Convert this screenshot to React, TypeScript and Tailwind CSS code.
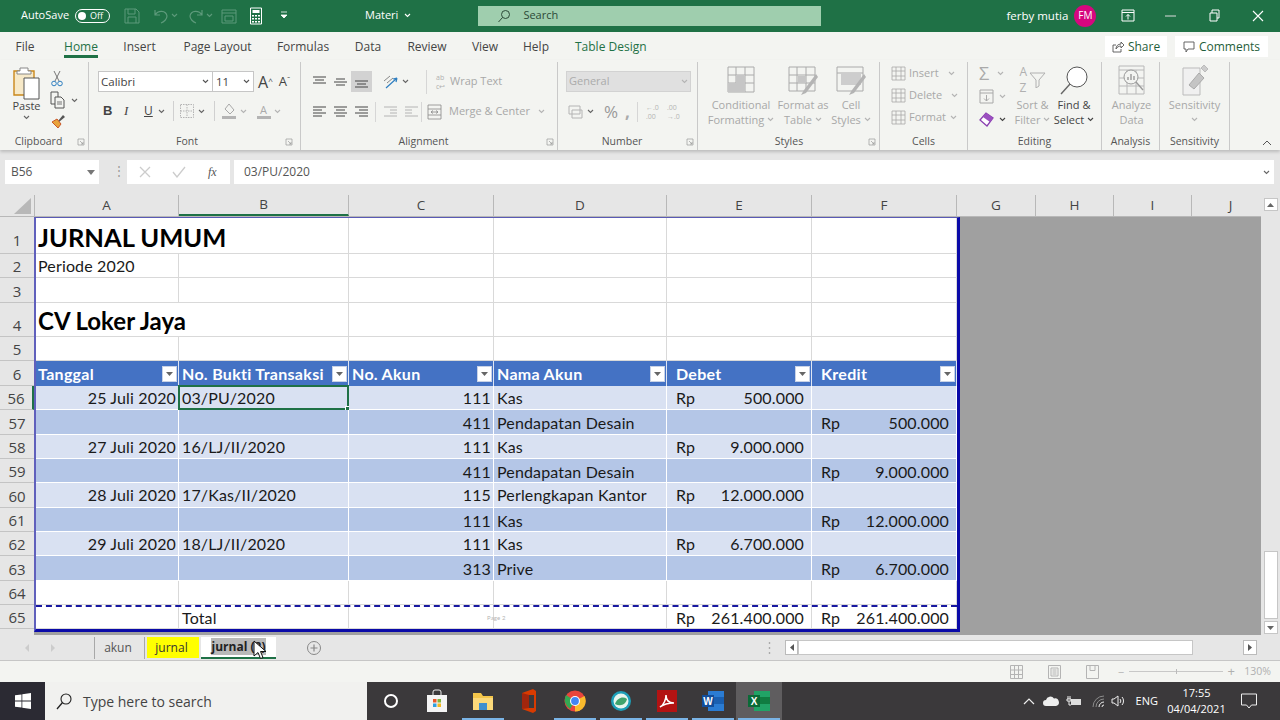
import React from "react";

type P = { className?: string; c?: string };
const Chev = ({ className = "", c = "#8a8a8a" }: P) => (
  <svg width="7" height="5" viewBox="0 0 7 5" className={className + " shrink-0"}><path d="M1 1l2.500 2.500L6 1" fill="none" stroke={c} strokeWidth="1.100" /></svg>
);
const Ic = ({ w = 16, h = 16, className = "", children }: { w?: number; h?: number; className?: string; children: React.ReactNode }) => (
  <svg width={w} height={h} viewBox={`0 0 ${w} ${h}`} fill="none" className={className + " shrink-0"}>{children}</svg>
);
const G = "#b4b4b4";

/* ---------- Title bar ---------- */
function TitleBar() {
  return (
    <div className="h-8 bg-[#1f7146] flex items-center text-white text-[11px] shrink-0 whitespace-nowrap pb-[1px]">
      <span className="ml-[21px] w-[51px]">AutoSave</span>
      <div className="ml-[3px] w-[35px] h-[14px] rounded-full border border-white flex items-center gap-[4px] pl-[2px]">
        <div className="w-2 h-2 rounded-full bg-white" />
        <span className="text-[9px] leading-none">Off</span>
      </div>
      <Ic w={18} h={18} className="ml-[13px]"><path d="M2 2h11l3 3v11H2zM5 2v5h7V2M5 16v-6h8v6" stroke="#5d9a7b" /></Ic>
      <Ic w={18} h={18} className="ml-[11px]"><path d="M3 3v5h5M3 8c3-5 11-5 12 1 0 3-3 6-6 7" stroke="#5d9a7b" strokeWidth="1.200" /></Ic>
      <Chev c="#5d9a7b" className="ml-[1px]" />
      <Ic w={18} h={18} className="ml-[9px]"><path d="M15 3v5h-5M15 8c-3-5-11-5-12 1 0 3 3 6 6 7" stroke="#5d9a7b" strokeWidth="1.200" /></Ic>
      <Chev c="#5d9a7b" className="ml-[1px]" />
      <Ic w={16} h={16} className="ml-[8px]"><path d="M1 2h14v13H1zM1 5h14M4 8h8v5H4z" stroke="#5d9a7b" /></Ic>
      <Ic w={14} h={18} className="ml-[12px]"><path d="M1.500 1h11v16h-11z" stroke="#fff" /><path d="M3.500 3h7v3h-7zM3 8h2v1.500H3zM6 8h2v1.500H6zM9 8h2v1.500H9zM3 11h2v1.500H3zM6 11h2v1.500H6zM9 11h2v1.500H9zM3 14h2v1.500H3zM6 14h2v1.500H6zM9 14h2v1.500H9z" fill="#fff" /></Ic>
      <Ic w={8} h={9} className="ml-[17px]"><path d="M1 1h6M1 4l3 3 3-3z" stroke="#fff" fill="#fff" strokeWidth=".8" /></Ic>
      <span className="ml-[77px]">Materi</span>
      <Chev c="#fff" className="ml-[6px]" />
      <div className="ml-[67px] w-[343px] h-[20px] bg-[#9fceae] flex items-center text-[#2c4a38]">
        <Ic w={14} h={14} className="ml-[19px]"><circle cx="8.500" cy="5.500" r="4" stroke="#2c4a38" /><path d="M5.500 8.500L1.500 13" stroke="#2c4a38" /></Ic>
        <span className="ml-[12px]">Search</span>
      </div>
      <span className="ml-[185px] text-[11.5px] w-[60px]">ferby mutia</span>
      <div className="ml-[8px] w-[22px] h-[22px] rounded-full bg-[#d6077f] flex items-center justify-center text-[10px]">FM</div>
      <Ic w={14} h={13} className="ml-[25px]"><path d="M1 1h12v11H1zM1 3.500h12M7 10.500V5.500M5 7.500l2-2 2 2" stroke="#fff" /></Ic>
      <Ic w={11} h={2} className="ml-[30px]"><path d="M0 1h11" stroke="#ddd" /></Ic>
      <Ic w={11} h={13} className="ml-[33px]"><path d="M1 4h7v8H1zM3 4V1h7v8H8" stroke="#fff" /></Ic>
      <Ic w={12} h={12} className="ml-[32px]"><path d="M1 1l10 10M11 1L1 11" stroke="#fff" strokeWidth="1.100" /></Ic>
    </div>
  );
}

/* ---------- Tabs ---------- */
function TabRow() {
  const t = (s: string, cls: string, active = false) => (
    <div className={"h-full flex items-center justify-center relative whitespace-nowrap " + cls}>
      <span className={active ? "text-[#1f7146]" : ""}>{s}</span>
      {active && <div className="absolute left-0 right-0 bottom-[2px] h-[3px] bg-[#1f7146]" />}
    </div>
  );
  return (
    <div className="h-7 bg-[#f3f4f1] flex items-center text-[12px] text-[#444] shrink-0 pt-[1px]">
      {t("File", "ml-[16px] w-[18px]")}
      {t("Home", "ml-[30px] w-[34px]", true)}
      {t("Insert", "ml-[26px] w-[31px]")}
      {t("Page Layout", "ml-[29px] w-[67px]")}
      {t("Formulas", "ml-[27px] w-[50px]")}
      {t("Data", "ml-[27px] w-[26px]")}
      {t("Review", "ml-[27px] w-[38px]")}
      {t("View", "ml-[26px] w-[26px]")}
      {t("Help", "ml-[25px] w-[26px]")}
      <div className="ml-[26px] w-[70px] text-[#1f7146] whitespace-nowrap">Table Design</div>
      <div className="ml-[460px] w-[62px] h-[21px] bg-white flex items-center justify-center gap-[4px] text-[#1f5e3b]">
        <Ic w={12} h={12}><path d="M1 4v7h8V8M1 4h3M4 8c0-3 2-5 5-5V1l3 3-3 3V5c-2 0-4 1-5 3z" stroke="#555" strokeWidth=".9" /></Ic>
        <span>Share</span>
      </div>
      <div className="ml-[8px] w-[93px] h-[21px] bg-white flex items-center justify-center gap-[4px] text-[#1f5e3b]">
        <Ic w={12} h={12}><path d="M1 1h10v7H5l-2 3V8H1z" stroke="#555" strokeWidth=".9" /></Ic>
        <span>Comments</span>
      </div>
    </div>
  );
}

/* ---------- Ribbon ---------- */
const Launcher = () => (
  <Ic w={8} h={8} className="ml-auto"><path d="M1 1h6v6H1zM3 3l3 3M4 6h2V4" stroke="#999" strokeWidth=".7" /></Ic>
);
function Group({ w, label, launcher = false, lab = "", children }: { w: string; label: string; launcher?: boolean; lab?: string; children: React.ReactNode }) {
  return (
    <div className={"h-full flex flex-col shrink-0 border-r border-[#c9c9c9] " + w}>
      <div className="h-[73px] flex">{children}</div>
      <div className={"h-[14px] flex items-center " + (launcher ? "pr-[3px] " : "") + lab}>
        <span className="flex-1 text-center text-[10.5px] text-[#555]">{label}</span>
        {launcher && <Launcher />}
      </div>
    </div>
  );
}
const Big = ({ a, b, w, icon, dark, chev2 }: { a: string; b?: string; w: string; icon: React.ReactNode; dark?: boolean; chev2?: boolean }) => (
  <div className={"flex flex-col items-center shrink-0 text-[11px] leading-[15px] " + w + (dark ? " text-[#444]" : " text-[#a8a8a8]")}>
    <div className="h-[35px] flex items-center justify-center">{icon}</div>
    <span className="whitespace-nowrap">{a}</span>
    <span className="whitespace-nowrap flex items-center gap-[3px]">{b}{chev2 && <Chev c={dark ? "#444" : G} />}</span>
  </div>
);
const HL = ({ rows, x = 1 }: { rows: number[][]; x?: number }) => (
  <Ic w={15} h={15}>{rows.map((r, i) => <path key={i} d={`M${r[0]} ${r[1]}h${r[2]}`} stroke={x ? "#444" : G} />)}</Ic>
);

function Ribbon() {
  return (
    <div className="h-[90px] bg-[#f3f4f1] flex text-[11px] shrink-0 pt-[2px] shadow-[0_2px_3px_rgba(0,0,0,0.18)] relative z-10">
      {/* Clipboard */}
      <Group w="w-[89px]" label="Clipboard" launcher>
        <div className="w-[50px] flex flex-col items-center text-[#444] pt-[4px] pl-[3px]">
          <Ic w={32} h={34}>
            <path d="M3 5h20v24H3z" fill="#f7e9c8" stroke="#c9871a" strokeWidth="1.400" />
            <path d="M9 5V2h8v3h3v3H6V5z" fill="#fff" stroke="#888" />
            <path d="M13 12h15v21H13z" fill="#fff" stroke="#555" />
          </Ic>
          <span className="-mt-[1px] leading-[14px]">Paste</span>
          <Chev c="#666" className="mt-[2px]" />
        </div>
        <div className="flex flex-col gap-[4px] pt-[8px]">
          <Ic w={14} h={17}><path d="M4 1l5 10M10 1L5 11" stroke="#777" /><circle cx="4" cy="13.500" r="2.300" stroke="#2f7fc1" /><circle cx="10" cy="13.500" r="2.300" stroke="#2f7fc1" /></Ic>
          <div className="flex items-center gap-[5px]">
            <Ic w={16} h={18}><path d="M1 1h7v12H1z" stroke="#555" /><path d="M5 6h6l3 3v8H5z" fill="#f3f4f1" stroke="#555" /><path d="M7 11h5M7 13h5" stroke="#777" /></Ic>
            <Chev c="#666" />
          </div>
          <Ic w={16} h={16}><path d="M8 8l5-6 2 2-6 5z" fill="#555" /><path d="M2 9l5-3 4 5-3 4z" fill="#e8a33c" stroke="#c9582a" /></Ic>
        </div>
      </Group>

      {/* Font */}
      <Group w="w-[212px]" label="Font" launcher lab="pr-[7px]">
        <div className="pl-[9px] pt-[9px] flex flex-col">
          <div className="flex items-center h-[21px]">
            <div className="w-[115px] h-[21px] bg-white border border-[#c6c6c6] flex items-center px-[2px] text-[11.5px] text-[#444]">Calibri<Chev c="#555" className="ml-auto mr-[1px]" /></div>
            <div className="w-[41px] h-[21px] bg-white border border-l-0 border-[#c6c6c6] flex items-center px-[3px] text-[11.5px] text-[#444]">11<Chev c="#555" className="ml-auto" /></div>
            <span className="ml-[4px] text-[16px] leading-none text-[#444]">A<sup className="text-[8px]">^</sup></span>
            <span className="ml-[6px] text-[13px] leading-none text-[#444]">A<sup className="text-[8px]">ˇ</sup></span>
          </div>
          <div className="flex items-center h-[20px] mt-[9px] pl-[5px] text-[#444]">
            <span className="w-[21px] font-bold text-[13px] [font-family:'Liberation_Sans',sans-serif]">B</span>
            <span className="w-[20px] italic text-[13px] [font-family:'Liberation_Serif',serif]">I</span>
            <span className="w-[14px] underline text-[12px]">U</span>
            <Chev c="#666" />
            <div className="ml-[8px] w-px h-[20px] bg-[#d0d0d0]" />
            <Ic w={16} h={16} className="ml-[5px]"><path d="M1.500 1.500h13v13h-13zM8 1.500v13M1.500 8h13" stroke={G} strokeDasharray="1.500 1" /></Ic>
            <Chev c="#666" className="ml-[3px]" />
            <div className="ml-[9px] w-px h-[20px] bg-[#d0d0d0]" />
            <Ic w={16} h={17} className="ml-[6px]"><path d="M8 1l5 6-4 4-5-5z" stroke="#a8a8a8" /><path d="M1 13h14v3H1z" fill={G} /></Ic>
            <Chev c={G} className="ml-[3px]" />
            <div className="ml-[9px] w-[15px] flex flex-col items-center text-[#aaa] leading-[12px]">A<div className="w-[14px] h-[3px] bg-[#b4b4b4]" /></div>
            <Chev c={G} className="ml-[3px]" />
          </div>
        </div>
      </Group>

      {/* Alignment */}
      <Group w="w-[257px]" label="Alignment" launcher>
        <div className="pl-[11px] pt-[9px] flex flex-col">
          <div className="flex items-center h-[21px]">
            <div className="w-[21px]"><HL rows={[[1, 3, 13], [3, 6, 9], [1, 9, 13]]} /></div>
            <div className="w-[18px]"><HL rows={[[3, 5, 9], [1, 8, 13], [3, 11, 9]]} /></div>
            <div className="w-[21px] h-[21px] bg-[#d2d2d2] flex items-center justify-center"><HL rows={[[1, 7, 13], [3, 10, 9], [1, 13, 13]]} /></div>
            <Ic w={18} h={16} className="ml-[10px]"><path d="M2 7l6-5M5 9l6-5" stroke="#888" /><path d="M4 14L15 4M15 4l-4 1M15 4l-1 4" stroke="#2f7fc1" strokeWidth="1.200" /></Ic>
            <Chev c="#666" className="ml-[2px]" />
            <div className="ml-[17px] w-px h-[24px] bg-[#d6d6d6]" />
            <div className="ml-[9px] text-[#b0b0b0] text-[7px] leading-[9px] w-[14px] flex flex-col"><span>ab</span><span>c↩</span></div>
            <span className="text-[#a8a8a8] whitespace-nowrap">Wrap Text</span>
          </div>
          <div className="flex items-center h-[21px] mt-[9px]">
            <div className="w-[21px]"><HL rows={[[1, 3, 13], [1, 6, 9], [1, 9, 13], [1, 12, 9]]} /></div>
            <div className="w-[21px]"><HL rows={[[1, 3, 13], [3, 6, 9], [1, 9, 13], [3, 12, 9]]} /></div>
            <div className="w-[15px]"><HL rows={[[1, 3, 13], [5, 6, 9], [1, 9, 13], [5, 12, 9]]} /></div>
            <div className="w-px h-[20px] bg-[#d6d6d6] ml-[6px]" />
            <div className="ml-[7px]"><HL x={0} rows={[[1, 3, 13], [7, 6, 7], [7, 9, 7], [1, 12, 13]]} /></div>
            <div className="ml-[6px]"><HL x={0} rows={[[1, 3, 13], [1, 6, 7], [1, 9, 7], [1, 12, 13]]} /></div>
            <div className="ml-[2px] w-px h-[20px] bg-[#d6d6d6]" />
            <Ic w={15} h={16} className="ml-[5px]"><path d="M1 1h13v14H1zM1 5h13M1 11h13M4 8h7M4 8l2-1.500M4 8l2 1.500M11 8L9 6.500M11 8L9 9.500" stroke="#888" strokeWidth=".8" /></Ic>
            <span className="ml-[7px] text-[#a8a8a8] whitespace-nowrap">Merge &amp; Center</span>
            <Chev c={G} className="ml-[8px]" />
          </div>
        </div>
      </Group>

      {/* Number */}
      <Group w="w-[140px]" label="Number" launcher>
        <div className="pl-[8px] pt-[9px] flex flex-col">
          <div className="w-[125px] h-[21px] bg-[#e0e0e0] border border-[#d2d2d2] flex items-center px-[2px] text-[#ababab]">General<Chev c={G} className="ml-auto" /></div>
          <div className="flex items-center h-[21px] mt-[9px] pl-[2px]">
            <Ic w={16} h={14}><path d="M1 1h11v8H1zM4 5h10v8H4z" stroke={G} /></Ic>
            <Chev c="#666" className="ml-[3px]" />
            <span className="ml-[10px] text-[17px] leading-none text-[#999] w-[18px]">%</span>
            <span className="ml-[3px] text-[17px] font-bold leading-none text-[#aaa] w-[9px]">,</span>
            <div className="ml-[3px] w-px h-[20px] bg-[#d6d6d6]" />
            <div className="ml-[8px] text-[#b4b4b4] text-[7px] leading-[9px] w-[18px] flex flex-col"><span>←.0</span><span>.00</span></div>
            <div className="ml-[3px] text-[#b4b4b4] text-[7px] leading-[9px] w-[18px] flex flex-col"><span>.00</span><span>→.0</span></div>
          </div>
        </div>
      </Group>

      {/* Styles */}
      <Group w="w-[182px]" label="Styles" launcher lab="pl-[12px]">
        <div className="flex pl-[14px]">
          <Big w="w-[58px]" a="Conditional" b="Formatting" chev2 icon={<Ic w={28} h={27}><path d="M1 1h26v25H1zM1 9h26M1 17h26M9 1v25M18 1v25" stroke="#aaa" /><path d="M9 9h9v8H9zM1 17h17v9H1z" fill="#c6c6c6" /></Ic>} />
          <Big w="w-[62px] ml-[2px]" a="Format as" b="Table" chev2 icon={<Ic w={30} h={32}><path d="M1 3h26v24H1zM1 11h26M1 19h26M9 3v24M18 3v24" stroke="#aaa" /><path d="M10 12h8v7h-8z" fill="#c6c6c6" /><path d="M28 10L16 26l-3 5 5-2L30 13z" fill="#b4b4b4" /></Ic>} />
          <Big w="w-[34px]" a="Cell" b="Styles" chev2 icon={<Ic w={30} h={32}><path d="M1 3h26v24H1zM1 9h26" stroke="#aaa" /><path d="M5 9h20v12H5z" fill="#cdcdcd" /><path d="M28 10L16 26l-3 5 5-2L30 13z" fill="#b4b4b4" /></Ic>} />
        </div>
      </Group>

      {/* Cells */}
      <Group w="w-[88px]" label="Cells">
        <div className="pl-[11px] flex flex-col text-[#a8a8a8] text-[11px]">
          {["Insert", "Delete", "Format"].map((s, i) => (
            <div key={s} className="h-[22px] flex items-center gap-[3px]">
              <Ic w={15} h={15}><path d="M1 1h13v13H1zM1 5h13M1 10h13M5 1v13M10 1v13" stroke="#a8a8a8" strokeWidth=".8" /></Ic>
              <span>{s}</span>
              <Chev c={G} className={i === 2 ? "ml-[1px]" : "ml-[6px]"} />
            </div>
          ))}
        </div>
      </Group>

      {/* Editing */}
      <Group w="w-[134px]" label="Editing">
        <div className="flex">
          <div className="pl-[11px] pt-[1px] flex flex-col gap-[3px]">
            <div className="h-[20px] flex items-center gap-[4px]"><span className="text-[18px] leading-none text-[#aaa] w-[14px]">Σ</span><Chev c={G} /></div>
            <div className="h-[20px] flex items-center gap-[5px]"><Ic w={15} h={15}><path d="M1 1h13v13H1zM1 4h13M7.500 6v6M5 9.500l2.500 2.500L10 9.500" stroke="#a8a8a8" /></Ic><Chev c={G} /></div>
            <div className="h-[20px] flex items-center gap-[5px]"><Ic w={15} h={15}><path d="M1 8l6-7 7 5-6 8z" fill="#fff" stroke="#8a3fb0" strokeWidth="1.300" /><path d="M4 5l7 5 3-4-7-5z" fill="#9b4fc0" /></Ic><Chev c="#444" /></div>
          </div>
          <Big w="w-[47px] ml-[3px]" a="Sort &" b="Filter" chev2 icon={<div className="flex items-center text-[#b0b0b0] text-[12px] leading-[16px]"><div className="w-[9px] flex flex-col"><span>A</span><span>Z</span></div><Ic w={17} h={16}><path d="M1 1h15l-6 7v6l-3 2V8z" stroke="#b0b0b0" /></Ic></div>} />
          <Big dark w="w-[36px]" a="Find &" b="Select" chev2 icon={<Ic w={30} h={32}><circle cx="18" cy="13" r="10" fill="#fff" stroke="#555" /><path d="M11 20L2 30" stroke="#666" strokeWidth="1.400" /></Ic>} />
        </div>
      </Group>

      {/* Analysis */}
      <Group w="w-[58px]" label="Analysis">
        <div className="w-full pl-[2px] flex">
          <Big w="w-full" a="Analyze" b="Data" icon={<Ic w={27} h={33}><path d="M1 3h25v28H1zM1 7h25M1 15h25M1 23h25M9 7v24M18 7v24" stroke="#b8b8b8" /><circle cx="13" cy="14" r="7" fill="#f3f4f1" stroke="#999" /><path d="M10 17v-3M13 17v-6M16 17v-4" stroke="#999" strokeWidth="1.400" /><path d="M18 19l7 8" stroke="#999" strokeWidth="1.400" /></Ic>} />
        </div>
      </Group>

      {/* Sensitivity */}
      <Group w="w-[70px]" label="Sensitivity">
        <div className="w-full flex flex-col items-center text-[#a8a8a8] text-[11px] leading-[15px]">
          <div className="h-[35px] flex items-center"><Ic w={28} h={33}><path d="M2 5h17v27H2z" fill="#f0f0f0" stroke="#bbb" /><path d="M8 22l10-12 5 5-10 11z" fill="#c4c4c4" stroke="#aaa" /><path d="M20 5l3-3 4 4-3 3z" fill="#ccc" stroke="#bbb" /></Ic></div>
          <span>Sensitivity</span>
          <Chev c={G} className="mt-[5px]" />
        </div>
      </Group>

      <div className="flex-1 flex items-end justify-end pr-[8px] pb-[4px]">
        <svg width="10" height="6" viewBox="0 0 10 6"><path d="M1 5l4-4 4 4" fill="none" stroke="#555" /></svg>
      </div>
    </div>
  );
}

/* ---------- Formula bar ---------- */
function FormulaBar() {
  return (
    <div className="h-[45px] bg-[#e6e6e6] pt-[10px] flex text-[12px] text-[#555] shrink-0 items-start">
      <div className="ml-[5px] w-[94px] h-[24px] bg-white flex items-center pl-[6px] pr-[4px]">B56<svg width="8" height="5" viewBox="0 0 8 5" className="ml-auto"><path d="M0 0h8L4 5z" fill="#777" /></svg></div>
      <span className="ml-[14px] w-[4px] h-[24px] text-[#999] leading-[22px]">⋮</span>
      <div className="ml-[10px] w-[103px] h-[24px] bg-white flex items-center">
        <Ic w={12} h={12} className="ml-[12px]"><path d="M1 1l10 10M11 1L1 11" stroke="#ccc" strokeWidth="1.300" /></Ic>
        <Ic w={14} h={12} className="ml-[21px]"><path d="M1 6l4 5 8-10" stroke="#ccc" strokeWidth="1.300" /></Ic>
        <span className="ml-[22px] italic text-[12px] [font-family:'Liberation_Serif',serif] text-[#555]">fx</span>
      </div>
      <div className="ml-[4px] w-[1040px] h-[24px] bg-white flex items-center pl-[10px]">
        <span>03/PU/2020</span>
        <Chev c="#666" className="ml-auto mr-[4px]" />
      </div>
    </div>
  );
}

/* ---------- Sheet ---------- */
type Cell = string | { rp: string };
type RowD = { n: string; h: string; kind: "plain" | "title" | "head" | "a" | "b" | "total"; cells?: Cell[] };
const rows: RowD[] = [
  { n: "1", h: "h-[36px]", kind: "title", cells: ["JURNAL UMUM"] },
  { n: "2", h: "h-[24px]", kind: "plain", cells: ["Periode 2020"] },
  { n: "3", h: "h-[25px]", kind: "plain" },
  { n: "4", h: "h-[34px]", kind: "title", cells: ["CV Loker Jaya"] },
  { n: "5", h: "h-[24px]", kind: "plain" },
  { n: "6", h: "h-[25px]", kind: "head", cells: ["Tanggal", "No. Bukti Transaksi", "No. Akun", "Nama Akun", "Debet", "Kredit"] },
  { n: "56", h: "h-[24px]", kind: "a", cells: ["25 Juli 2020", "03/PU/2020", "111", "Kas", { rp: "500.000" }, ""] },
  { n: "57", h: "h-[25px]", kind: "b", cells: ["", "", "411", "Pendapatan Desain", "", { rp: "500.000" }] },
  { n: "58", h: "h-[24px]", kind: "a", cells: ["27 Juli 2020", "16/LJ/II/2020", "111", "Kas", { rp: "9.000.000" }, ""] },
  { n: "59", h: "h-[24px]", kind: "b", cells: ["", "", "411", "Pendapatan Desain", "", { rp: "9.000.000" }] },
  { n: "60", h: "h-[25px]", kind: "a", cells: ["28 Juli 2020", "17/Kas/II/2020", "115", "Perlengkapan Kantor", { rp: "12.000.000" }, ""] },
  { n: "61", h: "h-[24px]", kind: "b", cells: ["", "", "111", "Kas", "", { rp: "12.000.000" }] },
  { n: "62", h: "h-[24px]", kind: "a", cells: ["29 Juli 2020", "18/LJ/II/2020", "111", "Kas", { rp: "6.700.000" }, ""] },
  { n: "63", h: "h-[25px]", kind: "b", cells: ["", "", "313", "Prive", "", { rp: "6.700.000" }] },
  { n: "64", h: "h-[24px]", kind: "plain" },
  { n: "65", h: "h-[24px]", kind: "total", cells: ["", "Total", "", "", { rp: "261.400.000" }, { rp: "261.400.000" }] },
];
const widths = ["w-[143px]", "w-[170px]", "w-[145px]", "w-[173px]", "w-[145px]", "w-[145px]"];

const Filter = () => (
  <div className="w-[15px] h-[16px] bg-white flex items-center justify-center shrink-0 ml-auto mr-[1px] border border-[#c8d2e6]">
    <svg width="7" height="4" viewBox="0 0 7 4"><path d="M0 0h7L3.500 4z" fill="#666" /></svg>
  </div>
);

function SheetRow({ r }: { r: RowD }) {
  const base = "shrink-0 h-full flex items-center relative ";
  const cells = Array.from({ length: 6 }, (_, i) => r.cells?.[i] ?? "");
  return (
    <div className={"flex [font-family:Lato,sans-serif] text-[16px] tracking-[0.15px] " + r.h + (r.kind === "total" ? " border-t-2 border-dashed border-[#1818a0]" : "")}>
      {cells.map((c, i) => {
        const w = widths[i];
        if (r.kind === "head")
          return (
            <div key={i} className={base + w + " bg-[#4472c4] border-r border-[#dfe6f4] text-white font-bold tracking-[0.3px]" + (i === 0 ? " pl-[2px]" : i === 4 || i === 5 ? " pl-[9px]" : " pl-[3px]")}>
              <span className="whitespace-nowrap">{c as string}</span>
              <Filter />
            </div>
          );
        if (r.kind === "title")
          return (
            <div key={i} className={base + w + " border-b border-[#d9d9d9]" + (i === 0 ? " pl-[2px]" : " border-r")}>
              {c && <span className={"whitespace-nowrap font-bold text-black tracking-normal absolute left-[2px] mt-[3px] " + (r.n === "1" ? "text-[25.5px]" : "text-[24px]")}>{c as string}</span>}
            </div>
          );
        const bg = r.kind === "a" ? " bg-[#d9e1f2] border-white" : r.kind === "b" ? " bg-[#b4c6e7] border-white pt-[2px]" : " border-[#d9d9d9]";
        const tinted = r.kind === "a" || r.kind === "b";
        const right = tinted && (i === 0 || i === 2);
        return (
          <div key={i} className={base + w + " border-r border-b text-[#1a1a1a]" + bg + (right ? " justify-end pr-[2px]" : r.kind === "plain" ? " pl-[2px]" : " pl-[3px]")}>
            {typeof c === "string" ? (
              <span className="whitespace-nowrap">{c}</span>
            ) : (
              <div className="flex w-full justify-between pl-[6px] pr-[7px]"><span>Rp</span><span>{c.rp}</span></div>
            )}
            {r.n === "56" && i === 1 && (
              <div className="absolute -left-px -top-px -right-px -bottom-px border-2 border-[#1f7146]">
                <div className="absolute -right-[3px] -bottom-[3px] w-[5px] h-[5px] bg-[#1f7146] border border-white" />
              </div>
            )}
            {r.n === "65" && i === 2 && (
              <span className="absolute left-[138px] whitespace-nowrap text-[6px] text-[#b5b5b5] z-10">Page 2</span>
            )}
          </div>
        );
      })}
    </div>
  );
}

function Sheet() {
  const colHead = (s: string, w: string, sel = false) => (
    <div key={s} className={"h-full flex items-center justify-center shrink-0 border-r border-[#b8b8b8] text-[#444] " + w + (sel ? " border-b-2 border-b-[#1f7146]" : "")}>{s}</div>
  );
  return (
    <div className="flex-1 flex min-h-0">
      <div className="flex-1 flex flex-col min-w-0">
        {/* Column headers */}
        <div className="h-[22px] flex bg-[#e6e6e6] text-[13.5px] shrink-0 border-b border-[#b8b8b8]">
          <div className="w-[35px] shrink-0 flex items-end justify-end pr-[3px] pb-[2px] border-r border-[#b8b8b8]">
            <svg width="17" height="16" viewBox="0 0 17 16"><path d="M17 0v16H0z" fill="#b8b8b8" /></svg>
          </div>
          {colHead("A", "w-[144px]")}
          {colHead("B", "w-[170px]", true)}
          {colHead("C", "w-[145px]")}
          {colHead("D", "w-[173px]")}
          {colHead("E", "w-[145px]")}
          {colHead("F", "w-[145px]")}
          {colHead("G", "w-[79px]")}
          {colHead("H", "w-[78px]")}
          {colHead("I", "w-[78px]")}
          <div className="flex-1 flex items-center justify-center text-[#444] pl-[8px]">J</div>
        </div>
        <div className="flex-1 flex min-h-0 bg-[#a0a0a0]">
          {/* Row headers */}
          <div className="w-[34px] shrink-0 bg-[#e6e6e6] flex flex-col text-[15px] text-[#444]">
            <div className="h-px shrink-0" />
            {rows.map((r) => (
              <div key={r.n} className={"flex items-end justify-center border-b border-[#c4c4c4] leading-[20px] " + r.h + (r.n === "1" ? " pb-[3px]" : " pb-[1px]") + (r.n === "56" ? " border-r-2 border-r-[#1f7146]" : "")}>{r.n}</div>
            ))}
          </div>
          {/* Table */}
          <div className="self-start bg-white border-t border-t-[#5a5ab4] border-l-2 border-l-[#6060bc] border-r-[3px] border-r-[#0a0aa8] border-b-[3px] border-b-[#0a0aa8]">
            {rows.map((r) => <SheetRow key={r.n} r={r} />)}
          </div>
          <div className="flex-1" />
        </div>
      </div>
      {/* Vertical scrollbar */}
      <div className="w-[19px] bg-[#e6e6e6] flex flex-col items-center pt-[3px] pb-[1px] shrink-0">
        <div className="w-[14px] h-[13px] bg-white border border-[#c6c6c6] flex items-center justify-center"><svg width="7" height="4" viewBox="0 0 7 4"><path d="M3.500 0L7 4H0z" fill="#666" /></svg></div>
        <div className="flex-1" />
        <div className="w-[14px] h-[68px] bg-white border border-[#c6c6c6]" />
        <div className="w-[14px] h-[13px] mt-[2px] bg-white border border-[#c6c6c6] flex items-center justify-center"><svg width="7" height="4" viewBox="0 0 7 4"><path d="M0 0h7L3.500 4z" fill="#666" /></svg></div>
      </div>
    </div>
  );
}

/* ---------- Sheet tabs ---------- */
function SheetTabs() {
  return (
    <div className="h-[26px] bg-[#e6e6e6] flex items-center text-[12px] text-[#555] shrink-0 border-b border-[#c6c6c6] relative">
      <svg width="4" height="8" viewBox="0 0 4 8" className="ml-[25px]"><path d="M4 0v8L0 4z" fill="#ccc" /></svg>
      <svg width="4" height="8" viewBox="0 0 4 8" className="ml-[22px]"><path d="M0 0v8l4-4z" fill="#ccc" /></svg>
      <div className="ml-[39px] w-px h-[22px] bg-[#a8a8a8]" />
      <div className="w-[49px] text-center pr-[3px]">akun</div>
      <div className="w-px h-[22px] bg-[#a8a8a8]" />
      <div className="ml-[2px] w-[52px] h-[21px] bg-[#ffff00] flex items-center justify-center text-[#333] pr-[3px]">jurnal</div>
      <div className="ml-[2px] w-[75px] h-[22px] bg-white border-b-2 border-[#1f7146] flex items-center justify-center">
        <span className="bg-[#b9b9b9] font-bold text-[#222] px-[1px] leading-[17px]">jurnal (2)</span>
      </div>
      <svg width="16" height="16" viewBox="0 0 16 16" className="ml-[30px]"><circle cx="8" cy="8" r="6.500" fill="none" stroke="#888" /><path d="M8 4.500v7M4.500 8h7" stroke="#888" strokeWidth="1.200" /></svg>
      <svg width="3" height="14" viewBox="0 0 3 14" className="ml-[446px]"><path d="M1.500 1v2M1.500 6v2M1.500 11v2" stroke="#aaa" strokeWidth="1.400" /></svg>
      <div className="ml-[14px] w-[13px] h-[15px] bg-white border border-[#bbb] flex items-center justify-center"><svg width="4" height="7" viewBox="0 0 4 7"><path d="M4 0v7L0 3.500z" fill="#555" /></svg></div>
      <div className="w-[395px] h-[15px] bg-white border border-[#c6c6c6]" />
      <div className="ml-[50px] w-[14px] h-[15px] bg-white border border-[#bbb] flex items-center justify-center"><svg width="4" height="7" viewBox="0 0 4 7"><path d="M0 0v7l4-3.500z" fill="#555" /></svg></div>
      {/* mouse cursor */}
      <svg width="14" height="20" viewBox="0 0 14 20" className="absolute left-[253px] top-[5px] z-20"><path d="M1 1v15l4-3.500 2.500 6 2.500-1-2.500-6H13z" fill="#fff" stroke="#111" strokeWidth="1" /></svg>
    </div>
  );
}

function StatusBar() {
  return (
    <div className="h-[21px] bg-[#f3f4f1] flex items-center justify-end text-[11px] text-[#b0b0b0] shrink-0 pr-[9px]">
      <Ic w={13} h={14}><path d="M.5.500h12v13H.500zM.5 5h12M.5 9.500h12M4.500.5v13M8.500.5v13" stroke="#b4b4b4" /></Ic>
      <Ic w={13} h={14} className="ml-[25px]"><path d="M.5.500h12v13H.500zM3 3h7v8H3zM4.500 5h4M4.500 7h4M4.500 9h4" stroke="#b4b4b4" /></Ic>
      <Ic w={13} h={14} className="ml-[25px]"><path d="M.5.500h12v13H.500zM4 .5v5h5v-5" stroke="#b4b4b4" /></Ic>
      <span className="ml-[18px] w-[7px] text-center leading-none">−</span>
      <div className="ml-[5px] w-[94px] h-px bg-[#c8c8c8] relative flex justify-center"><div className="w-px h-[5px] -mt-[2px] bg-[#bbb]" /></div>
      <span className="ml-[3px] w-[10px] text-center text-[13px] leading-none">+</span>
      <span className="ml-[8px] text-[10.5px]">130%</span>
    </div>
  );
}

/* ---------- Taskbar ---------- */
function Task({ children, on, active }: { children: React.ReactNode; on?: boolean; active?: boolean }) {
  return (
    <div className={"w-[46px] h-full shrink-0 flex items-center justify-center relative " + (active ? "bg-[#5f5d5f]" : "")}>
      {children}
      {on && <div className="absolute bottom-0 left-[2px] right-[2px] h-[2px] bg-[#7ab4e6]" />}
    </div>
  );
}
function Taskbar() {
  return (
    <div className="h-[38px] bg-[#3b393b] flex items-center text-white shrink-0">
      <div className="w-[45px] h-full bg-[#2b2a33] flex items-center justify-center">
        <svg width="16" height="16" viewBox="0 0 16 16"><path d="M0 2.300l6.500-.9v6.200H0zM7.300 1.300L16 0v7.600H7.300zM0 8.400h6.500v6.200L0 13.700zM7.300 8.400H16V16l-8.700-1.300z" fill="#fff" /></svg>
      </div>
      <div className="w-[322px] h-full bg-[#f1f1ef] flex items-center text-[14px] text-[#444]">
        <Ic w={16} h={17} className="ml-[11px]"><circle cx="10" cy="6" r="5" stroke="#222" strokeWidth="1.100" /><path d="M6.500 9.500L1 16" stroke="#222" strokeWidth="1.300" /></Ic>
        <span className="ml-[11px]">Type here to search</span>
      </div>
      <div className="w-[47px] h-full flex items-center justify-center"><div className="w-[14px] h-[14px] rounded-full border-[2.5px] border-white" /></div>
      <Task><svg width="22" height="24" viewBox="0 0 22 24"><path d="M7 6V3a2 2 0 012-2h4a2 2 0 012 2v3" fill="none" stroke="#eee" /><path d="M1 6h20v17H1z" fill="#f4f4f4" /><path d="M7 10h3.500v3.500H7z" fill="#e9572b" /><path d="M11.500 10H15v3.500h-3.500z" fill="#7eb33c" /><path d="M7 14.500h3.500V18H7z" fill="#2e9fe0" /><path d="M11.500 14.500H15V18h-3.500z" fill="#f3b81f" /></svg></Task>
      <Task on><svg width="22" height="20" viewBox="0 0 22 20"><path d="M1 2h8l2 3h10v14H1z" fill="#f4c64a" /><path d="M1 7h20v12H1z" fill="#fbd97a" /><path d="M7 12h8v7H7z" fill="#3f8fcf" /></svg></Task>
      <Task><svg width="18" height="26" viewBox="0 0 18 26"><path d="M2 5l11-4 3 2v20l-3 2L2 21z" fill="#d83b01" /><path d="M2 5l7 2v13l-7 1z" fill="#a1260d" /><path d="M9 7h5v13H9z" fill="#3b393b" /></svg></Task>
      <Task on><svg width="22" height="22" viewBox="0 0 22 22"><circle cx="11" cy="11" r="10.500" fill="#e8453c" /><path d="M11 11L20.500 6A10.500 10.500 0 0 1 11 21.500z" fill="#f9bb2d" /><path d="M11 11L6 19A10.500 10.500 0 0 1 2 5z" fill="#34a853" /><circle cx="11" cy="11" r="5" fill="#fff" /><circle cx="11" cy="11" r="3.900" fill="#4285f4" /></svg></Task>
      <Task on><svg width="22" height="22" viewBox="0 0 22 22"><circle cx="11" cy="11" r="10" fill="#1d9fb8" /><circle cx="11" cy="11" r="7.500" fill="#e7f5ee" /><path d="M5 14c2-6 8-8 12-5-1 5-6 8-12 5z" fill="#3fa36c" /></svg></Task>
      <Task on><svg width="22" height="24" viewBox="0 0 22 24"><path d="M1 1h20v22H1z" fill="#b31313" /><path d="M4 18c4-2 6-8 6-12 0 5 3 8 8 8-5 0-10 1-14 4z" fill="none" stroke="#fff" strokeWidth="1.500" /></svg></Task>
      <Task on><svg width="24" height="22" viewBox="0 0 24 22"><path d="M7 1h16v20H7z" fill="#2b7cd3" /><path d="M7 7h16v7H7z" fill="#1a5fb0" /><path d="M1 5h12v12H1z" fill="#124d9a" /><text x="7" y="14.500" textAnchor="middle" fontSize="10" fontWeight="700" fill="#fff" fontFamily="Liberation Sans">W</text></svg></Task>
      <Task on active><svg width="24" height="22" viewBox="0 0 24 22"><path d="M7 1h16v20H7z" fill="#21a366" /><path d="M7 7h16v7H7z" fill="#107c41" /><path d="M1 5h12v12H1z" fill="#0b6a37" /><text x="7" y="14.500" textAnchor="middle" fontSize="10" fontWeight="700" fill="#fff" fontFamily="Liberation Sans">X</text></svg></Task>
      <div className="flex-1" />
      <svg width="12" height="7" viewBox="0 0 12 7"><path d="M1 6l5-5 5 5" fill="none" stroke="#eee" strokeWidth="1.200" /></svg>
      <svg width="16" height="10" viewBox="0 0 16 10" className="ml-[8px]"><path d="M3 10a3 3 0 010-6 4.500 4.500 0 018-1.500A3.500 3.500 0 0113 10z" fill="#eee" /></svg>
      <svg width="16" height="13" viewBox="0 0 16 13" className="ml-[7px]"><path d="M5 4h10v6H5z" fill="#ddd" /><path d="M2 1v3M4 1v3M1 4h4v2H1zM3 6v4h2" stroke="#eee" fill="none" /></svg>
      <svg width="14" height="14" viewBox="0 0 14 14" className="ml-[9px]"><path d="M2 13a11 11 0 0111-11M5 13a8 8 0 018-8" stroke="#8c8c8c" fill="none" /><path d="M8 13a5 5 0 015-5M11 13a2 2 0 012-2" stroke="#eee" fill="none" /></svg>
      <svg width="15" height="14" viewBox="0 0 15 14" className="ml-[6px]"><path d="M1 5h2l4-3v10l-4-3H1z" fill="none" stroke="#eee" /><path d="M9 5a3 3 0 010 4M11 3a6 6 0 010 8" stroke="#eee" fill="none" /></svg>
      <span className="ml-[10px] text-[11px]">ENG</span>
      <div className="ml-[11px] w-[55px] flex flex-col items-center text-[11px] leading-[16px]"><span>17:55</span><span>04/04/2021</span></div>
      <svg width="16" height="16" viewBox="0 0 16 16" className="ml-[17px] mr-[23px]"><path d="M.5 1h15v11h-5L8 15l-2.500-3h-5z" fill="none" stroke="#eee" /></svg>
    </div>
  );
}

export default function App() {
  return (
    <div className="w-[1280px] h-[720px] overflow-hidden flex flex-col bg-[#e6e6e6] [font-family:'Open_Sans',sans-serif]">
      <TitleBar />
      <TabRow />
      <Ribbon />
      <FormulaBar />
      <Sheet />
      <SheetTabs />
      <StatusBar />
      <Taskbar />
    </div>
  );
}
